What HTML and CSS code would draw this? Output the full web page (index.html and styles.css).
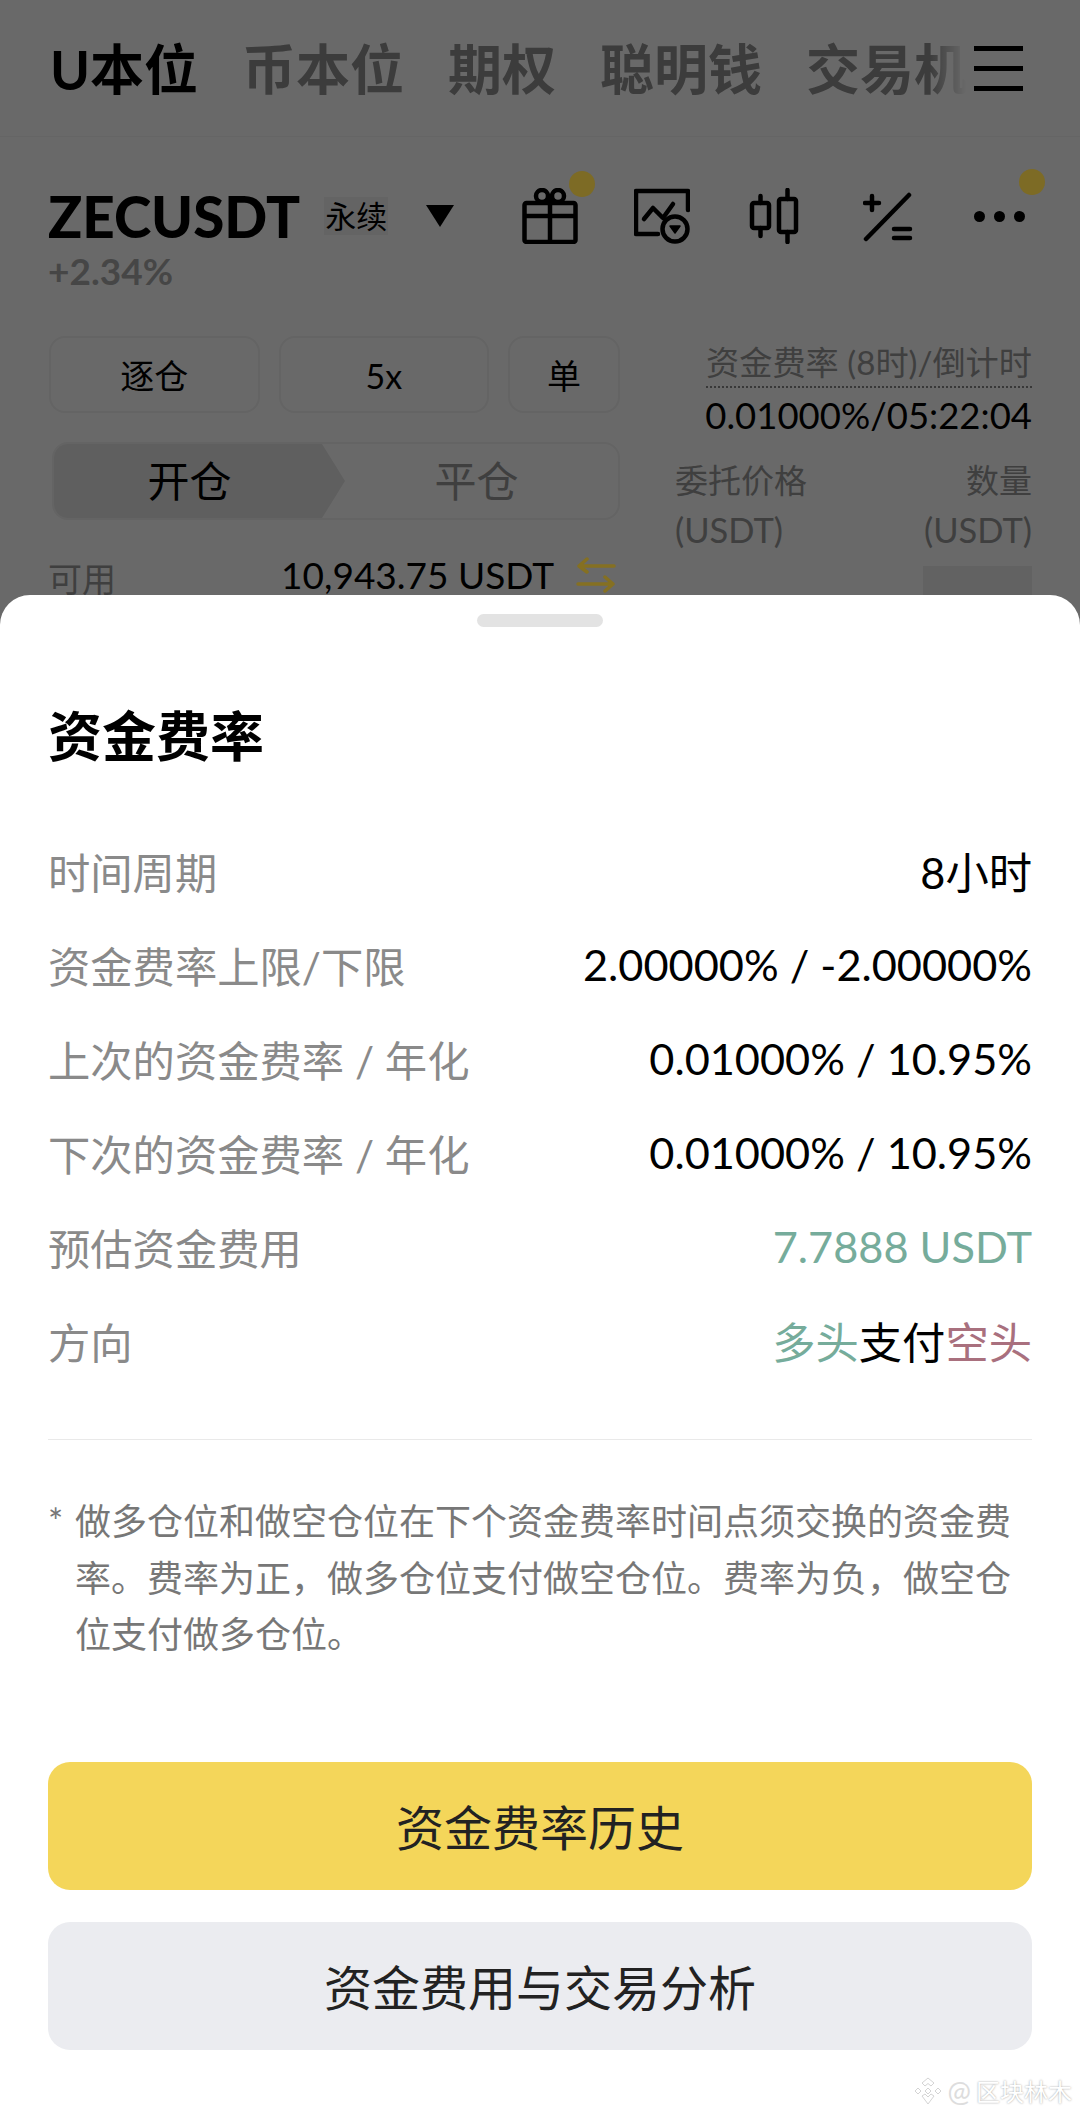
FILE: index.html
```html
<!DOCTYPE html>
<html lang="zh">
<head>
  <meta charset="utf-8">
  <title>资金费率</title>
  <link rel="stylesheet" href="styles.css">
</head>
<body>
  <div class="back">
    <div class="tabs">
      <div class="tab-list">
        <span class="tab tab-active">U本位</span>
        <span class="tab">币本位</span>
        <span class="tab">期权</span>
        <span class="tab">聪明钱</span>
        <span class="tab">交易机</span>
      </div>
      <div class="burger"><i></i><i></i><i></i></div>
    </div>

    <div class="pair-row">
      <div class="pair-name">ZECUSDT</div>
      <div class="pair-tag">永续</div>
      <div class="pair-caret"></div>
      <div class="pair-icons">
        <div class="ico ico-gift">
          <svg width="56" height="56" viewBox="0 0 56 56" fill="none" stroke="#000" stroke-width="4.5" stroke-linejoin="round">
            <circle cx="20" cy="8" r="6"/>
            <circle cx="36" cy="8" r="6"/>
            <rect x="2.5" y="15" width="51" height="39" rx="2"/>
            <path d="M2.5 28H53.5M28 6V54"/>
          </svg>
          <span class="ico-dot"></span>
        </div>
        <div class="ico ico-chart">
          <svg width="56" height="56" viewBox="0 0 56 56" fill="none" stroke="#000" stroke-width="4.5" stroke-linecap="round" stroke-linejoin="round">
            <path d="M54 22V3H2V46H24"/>
            <path d="M10 31L19 20L29 30L39 16"/>
            <circle cx="41" cy="41" r="12.5"/>
            <path d="M36 38H46L41 45Z" fill="#000" stroke-width="1.5"/>
          </svg>
        </div>
        <div class="ico ico-candle">
          <svg width="50" height="56" viewBox="0 0 50 56" fill="none" stroke="#000" stroke-width="4.5" stroke-linecap="round" stroke-linejoin="round">
            <rect x="3" y="15" width="17" height="25" rx="2"/>
            <path d="M11.5 8V15M11.5 40V48"/>
            <rect x="30" y="11" width="17" height="33" rx="2"/>
            <path d="M38.5 2V11M38.5 44V54"/>
          </svg>
        </div>
        <div class="ico ico-calc">
          <svg width="50" height="56" viewBox="0 0 50 56" fill="none" stroke="#000" stroke-width="4.5" stroke-linecap="round">
            <path d="M9 8V22M2 15H16"/>
            <path d="M46 7L3 51"/>
            <path d="M31 41H47M31 50H47"/>
          </svg>
        </div>
        <div class="ico ico-more">
          <span></span><span></span><span></span>
          <span class="ico-dot"></span>
        </div>
      </div>
    </div>
    <div class="pair-change">+2.34%</div>

    <div class="trade">
      <div class="trade-left">
        <div class="btn-row">
          <div class="opt opt-wide">逐仓</div>
          <div class="opt opt-wide">5x</div>
          <div class="opt opt-narrow">单</div>
        </div>
        <div class="side-switch">
          <div class="side side-open">开仓</div>
          <div class="side side-close">平仓</div>
        </div>
        <div class="avail">
          <span class="avail-label">可用</span>
          <span class="avail-val">10,943.75 USDT</span>
          <svg class="avail-swap" width="40" height="36" viewBox="0 0 40 36" fill="none" stroke="#857022" stroke-width="3.500" stroke-linecap="round" stroke-linejoin="round">
            <path d="M38 9H3M11 2L3 9L11 15"/>
            <path d="M2 27H37M29 20L37 27L29 34"/>
          </svg>
        </div>
      </div>
      <div class="trade-right">
        <div class="fund-title"><span>资金费率 (8时)/倒计时</span></div>
        <div class="fund-val">0.01000%/05:22:04</div>
        <div class="book-head">
          <span>委托价格</span><span>数量</span>
          <span>(USDT)</span><span>(USDT)</span>
        </div>
        <div class="book-row">
          <span class="book-price">846.78</span>
          <span class="book-qty">4.84K</span>
        </div>
      </div>
    </div>
    <div class="dim"></div>
  </div>

  <div class="sheet">
    <div class="handle"></div>
    <h2 class="sheet-title">资金费率</h2>
    <div class="rows">
      <div class="row"><span class="k">时间周期</span><span class="v">8小时</span></div>
      <div class="row"><span class="k">资金费率上限/下限</span><span class="v">2.00000% / -2.00000%</span></div>
      <div class="row"><span class="k">上次的资金费率 / 年化</span><span class="v">0.01000% / 10.95%</span></div>
      <div class="row"><span class="k">下次的资金费率 / 年化</span><span class="v">0.01000% / 10.95%</span></div>
      <div class="row"><span class="k">预估资金费用</span><span class="v up">7.7888 USDT</span></div>
      <div class="row"><span class="k">方向</span><span class="v"><span class="up">多头</span>支付<span class="down">空头</span></span></div>
    </div>
    <div class="note">
      <span class="note-star">*</span>
      <p>做多仓位和做空仓位在下个资金费率时间点须交换的资金费率。费率为正，做多仓位支付做空仓位。费率为负，做空仓位支付做多仓位。</p>
    </div>
    <div class="action action-main">资金费率历史</div>
    <div class="action action-sub">资金费用与交易分析</div>
    <div class="mark">
      <svg width="30" height="28" viewBox="0 0 30 28" fill="#fff" stroke="#d4d4d4" stroke-width="1">
        <path d="M15 1L21 6L18 9L15 6.500L12 9L9 6Z"/>
        <path d="M15 11L18 14L15 17L12 14Z"/>
        <path d="M5 11L8 14L5 17L2 14Z"/>
        <path d="M25 11L28 14L25 17L22 14Z"/>
        <path d="M9 19L12 17L15 20L18 17L21 19L15 27Z"/>
      </svg>
      <span class="mark-at">@</span>
      <span>区块林木</span>
    </div>
  </div>
</body>
</html>
```

FILE: styles.css
```css
* {
  box-sizing: border-box;
}

html, body {
  margin: 0;
  padding: 0;
}

body {
  width: 1080px;
  height: 2116px;
  overflow: hidden;
  background: #fff;
  color: #000;
  font-family: "Lato", "Noto Sans CJK SC", sans-serif;
}

/* page behind the sheet */
.back {
  position: relative;
  height: 625px;
  overflow: hidden;
  background: #fff;
}

.dim {
  position: absolute;
  inset: 0;
  background: rgba(0, 0, 0, .59);
}

.tabs {
  display: flex;
  align-items: center;
  height: 137px;
  padding: 0 57px 0 50px;
  border-bottom: 1px solid #f6f6f6;
}

.tab-list {
  position: relative;
  display: flex;
  gap: 44px;
  width: 916px;
  padding-top: 4px;
  overflow: hidden;
  white-space: nowrap;
}

.tab-list::after {
  content: "";
  position: absolute;
  top: 0;
  right: 0;
  bottom: 0;
  width: 36px;
  background: linear-gradient(to right, rgba(255, 255, 255, 0), #fff);
}

.tab {
  font-size: 54px;
  font-weight: 700;
  line-height: 70px;
  color: #929292;
}

.tab-active {
  color: #000;
}

.burger {
  display: flex;
  flex-direction: column;
  gap: 15px;
  width: 49px;
  margin-left: 8px;
}

.burger i {
  display: block;
  height: 5px;
  background: #000;
}

.pair-row {
  display: flex;
  align-items: center;
  height: 70px;
  margin-top: 44px;
  padding: 0 54px 0 48px;
}

.pair-name {
  font-size: 56.500px;
  font-weight: 900;
  line-height: 70px;
}

.pair-tag {
  width: 64px;
  height: 38px;
  margin-left: 24px;
  background: #f3f3f3;
  font-size: 31px;
  line-height: 38px;
  white-space: nowrap;
  text-align: center;
}

.pair-caret {
  width: 0;
  height: 0;
  margin-left: 38px;
  border-left: 14px solid transparent;
  border-right: 14px solid transparent;
  border-top: 22px solid #000;
}

.pair-icons {
  display: flex;
  align-items: center;
  margin-left: auto;
}

.ico {
  position: relative;
  display: flex;
  align-items: center;
  height: 56px;
}

.ico-gift { margin-right: 56px; }
.ico-chart { margin-right: 59px; }
.ico-candle { margin-right: 64px; }
.ico-calc { margin-right: 61px; }

.ico-more {
  gap: 9px;
  width: 52px;
}

.ico-more span {
  width: 11px;
  height: 11px;
  border-radius: 50%;
  background: #000;
}

.ico .ico-dot {
  position: absolute;
  z-index: 1;
  width: 26px;
  height: 26px;
  border-radius: 50%;
  background: #7d6b25;
}

.ico-gift .ico-dot {
  top: -17px;
  left: 47px;
}

.ico-more .ico-dot {
  top: -19px;
  left: 45px;
}

.pair-change {
  padding-left: 48px;
  font-size: 37px;
  font-weight: 700;
  line-height: 40px;
  color: #aaa;
}

.trade {
  display: flex;
  justify-content: space-between;
  margin-top: 45px;
  padding: 0 48px;
}

.trade-left {
  width: 572px;
}

.btn-row {
  display: flex;
  gap: 19px;
  padding-left: 1px;
}

.opt {
  height: 77px;
  border: 2px solid #f2f2f2;
  border-radius: 16px;
  font-size: 34px;
  line-height: 76px;
  text-align: center;
}

.opt-wide { width: 211px; }
.opt-narrow { width: 112px; }

.side-switch {
  display: flex;
  height: 78px;
  margin: 29px 0 0 4px;
  border: 2px solid #f2f2f2;
  border-radius: 16px;
  overflow: hidden;
}

.side {
  font-size: 42px;
  line-height: 74px;
  text-align: center;
}

.side-open {
  width: 291px;
  padding-right: 20px;
  background: #e6e6e6;
  clip-path: polygon(0 0, 268px 0, 100% 50%, 268px 100%, 0 100%);
}

.side-close {
  flex: 1;
  padding-right: 10px;
  color: #999;
}

.avail {
  display: flex;
  align-items: center;
  margin-top: 32px;
  padding-right: 4px;
  font-size: 37px;
  line-height: 46px;
}

.avail-label {
  position: relative;
  top: 4px;
  font-size: 34px;
  color: #999;
}

.avail-val {
  margin-left: auto;
}

.avail-swap {
  position: relative;
  z-index: 1;
  margin-left: 22px;
}

.trade-right {
  width: 357px;
  margin-top: 3px;
  text-align: right;
  font-size: 33px;
}

.fund-title span {
  display: inline-block;
  padding-bottom: 1px;
  border-bottom: 2px dotted #888;
  font-size: 33.200px;
  line-height: 46px;
  color: #999;
}

.fund-val {
  margin-top: 5px;
  font-size: 36.500px;
  line-height: 44px;
}

.book-head {
  display: grid;
  grid-template-columns: 1fr 1fr;
  row-gap: 6px;
  margin-top: 21px;
  line-height: 44px;
  color: #999;
}

.book-head span:nth-child(n+3) {
  font-size: 34.500px;
}

.book-head span:nth-child(odd) {
  text-align: left;
}

.book-row {
  display: flex;
  justify-content: space-between;
  margin-top: 14px;
  line-height: 40px;
}

.book-price {
  margin-left: 14px;
  padding-top: 27px;
  color: #888;
}

.book-qty {
  width: 109px;
  padding-top: 27px;
  padding-right: 8px;
  background: #ededed;
}

/* bottom sheet */
.sheet {
  position: relative;
  height: 1521px;
  margin-top: -30px;
  padding: 19px 48px 0;
  border-radius: 30px 30px 0 0;
  background: #fff;
}

.handle {
  width: 126px;
  height: 13px;
  margin: 0 auto;
  border-radius: 7px;
  background: #e3e3e3;
}

.sheet-title {
  margin: 71px 0 0;
  font-size: 54px;
  font-weight: 700;
  line-height: 78px;
}

.rows {
  margin-top: 47px;
  padding-bottom: 52px;
  border-bottom: 1px solid #e9e9e9;
}

.row {
  display: flex;
  justify-content: space-between;
  align-items: center;
  height: 94px;
}

.k {
  font-size: 42.300px;
  color: #8a8a8a;
}

.v {
  font-size: 43.300px;
}

.up {
  color: #76ac9b;
}

.down {
  color: #a9707e;
}

.note {
  display: flex;
  gap: 14px;
  margin-top: 53px;
  font-size: 36px;
  line-height: 56.500px;
  color: #777;
}

.note p {
  margin: 0;
}

.note-star {
  flex: none;
  width: 13px;
}

.action {
  height: 128px;
  border-radius: 22px;
  font-size: 48px;
  line-height: 131px;
  text-align: center;
  color: #222;
}

.action-main {
  margin-top: 99px;
  background: #f4d65a;
}

.action-sub {
  margin-top: 32px;
  background: #ebecf0;
}

.mark {
  position: absolute;
  right: 8px;
  bottom: 8px;
  display: flex;
  align-items: center;
  gap: 5px;
  font-size: 24px;
  color: #fff;
  text-shadow: 0 0 2px #999;
}

.mark-at {
  font-size: 28px;
  color: #ddd;
  text-shadow: none;
}
```
